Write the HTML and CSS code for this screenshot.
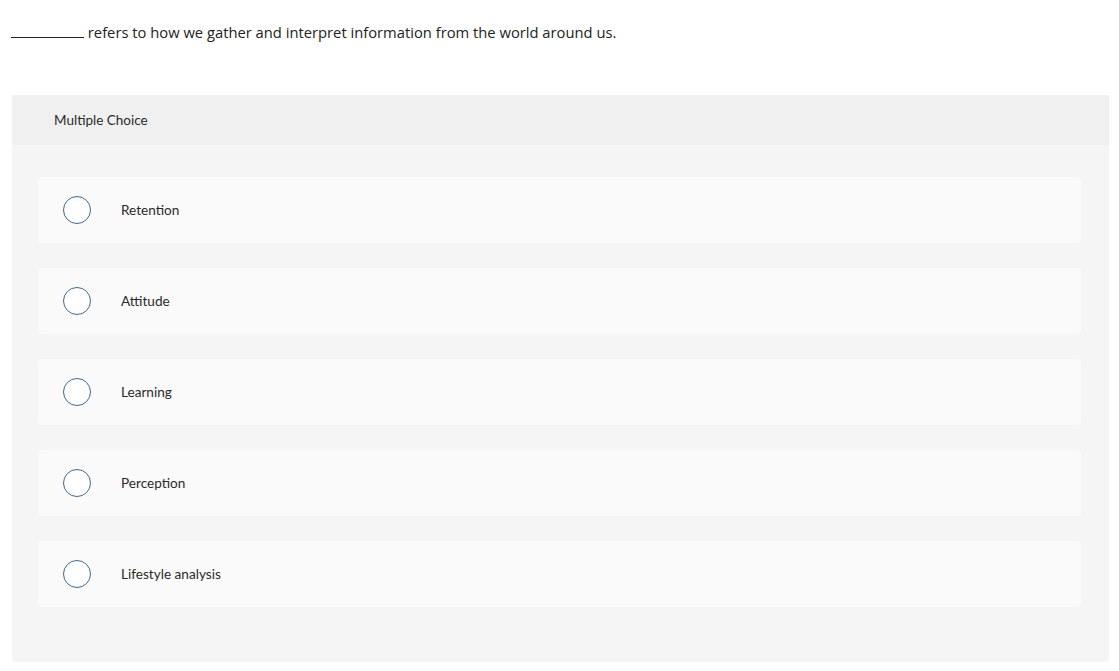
FILE: index.html
```html
<!DOCTYPE html>
<html lang="en">
<head>
<meta charset="utf-8">
<title>Multiple Choice</title>
<link rel="stylesheet" href="styles.css">
</head>
<body>
<div class="question"><span class="blank"></span> refers to how we gather and interpret information from the world around us.</div>
<section class="panel">
  <div class="panel-head">Multiple Choice</div>
  <div class="options">
    <label class="option"><span class="radio"></span><span class="opt-text">Retention</span></label>
    <label class="option"><span class="radio"></span><span class="opt-text">Attitude</span></label>
    <label class="option"><span class="radio"></span><span class="opt-text">Learning</span></label>
    <label class="option"><span class="radio"></span><span class="opt-text">Perception</span></label>
    <label class="option"><span class="radio"></span><span class="opt-text">Lifestyle analysis</span></label>
  </div>
</section>
</body>
</html>
```
FILE: styles.css
```css
* { box-sizing: border-box; }
body {
  margin: 0;
  background: #ffffff;
  font-family: "Open Sans", "Liberation Sans", sans-serif;
  color: #222;
}
.question {
  padding: 22px 0 0 11px;
  font-size: 14.75px;
  line-height: 20px;
  height: 95px;
  color: #222;
}
.blank {
  display: inline-block;
  width: 73px;
  border-bottom: 1px solid #222;
  vertical-align: baseline;
}
.panel {
  margin: 0 10px 0 12px;
  background: #f5f5f5;
  height: 567px;
  border-radius: 0 0 3px 3px;
}
.panel-head {
  height: 50px;
  background: #f0f0f0;
  padding-left: 42px;
  display: flex;
  align-items: center;
  font-family: "Lato", "Liberation Sans", sans-serif;
  font-size: 13.5px;
  color: #2a2a2a;
}
.options {
  padding: 32px 28px 0 26px;
  display: flex;
  flex-direction: column;
  gap: 25px;
}
.option {
  height: 66px;
  background: #fafafa;
  border-radius: 4px;
  display: flex;
  align-items: center;
  padding-left: 25px;
}
.radio {
  width: 28px;
  height: 28px;
  border: 1.5px solid #3d6894;
  border-radius: 50%;
  background: #fff;
  flex: none;
}
.opt-text {
  margin-left: 30px;
  font-family: "Lato", "Liberation Sans", sans-serif;
  font-size: 13.6px;
  color: #2a2a2a;
}
```
